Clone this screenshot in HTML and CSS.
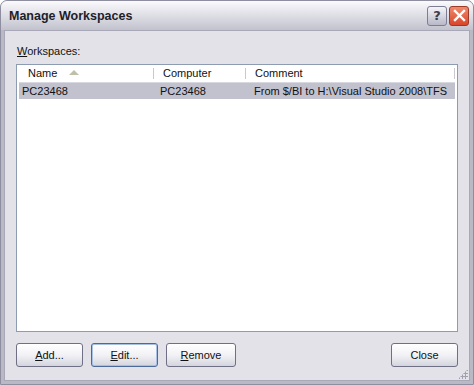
FILE: index.html
```html
<!DOCTYPE html>
<html>
<head>
    <title>Manage Workspaces</title>
    <meta name="viewport" content="width=device-width, initial-scale=1.0">
    <link rel="stylesheet" href="styles.css">
</head>
<body>
    <div class="window">
        <div class="titlebar">
            <span class="title">Manage Workspaces</span>
            <div class="caption-buttons">
                <div class="cap-btn help">?</div>
                <div class="cap-btn close">
                    <svg width="13" height="13" viewBox="0 0 13 13">
                        <path d="M2 2 L11 11 M11 2 L2 11" stroke="#fff" stroke-width="2.4" stroke-linecap="square"/>
                    </svg>
                </div>
            </div>
        </div>
        <div class="client">
            <div class="label"><u>W</u>orkspaces:</div>
            <div class="listview">
                <div class="lv-header">
                    <div class="col col-name">Name <span class="sort-arrow"></span></div>
                    <div class="col col-computer">Computer</div>
                    <div class="col col-comment">Comment</div>
                </div>
                <div class="lv-row selected">
                    <div class="col col-name">PC23468</div>
                    <div class="col col-computer">PC23468</div>
                    <div class="col col-comment">From $/BI to H:\Visual Studio 2008\TFS</div>
                </div>
            </div>
            <div class="button-row">
                <button class="btn"><u>A</u>dd...</button>
                <button class="btn default"><u>E</u>dit...</button>
                <button class="btn wide"><u>R</u>emove</button>
                <span class="spacer"></span>
                <button class="btn">Close</button>
            </div>
            <div class="grip"></div>
        </div>
    </div>
</body>
</html>
```

FILE: styles.css
```css
body {
    margin: 0;
    background-color: #fff;
    font-family: "Liberation Sans", Arial, sans-serif;
    font-size: 11px;
    color: #111;
}
.window {
    width: 474px;
    height: 385px;
    box-sizing: border-box;
    background-color: #b9b9c6;
    border: 1px solid #8e8ea0;
    border-radius: 7px 7px 0 0;
    padding: 0 3px 3px 3px;
    display: flex;
    flex-direction: column;
}
.titlebar {
    height: 29px;
    margin: 0 -3px;
    padding: 0 4px 0 8px;
    display: flex;
    align-items: center;
    border-radius: 6px 6px 0 0;
    background: linear-gradient(#fbfbfd 0%, #e6e6ec 35%, #d3d3dc 70%, #c2c2cd 100%);
}
.title {
    font-family: "Liberation Sans", Arial, sans-serif;
    font-weight: bold;
    font-size: 12.5px;
    color: #1e1e2a;
    flex: 1;
    padding-top: 1px;
}
.caption-buttons {
    display: flex;
    gap: 2px;
}
.cap-btn {
    width: 20px;
    height: 20px;
    border-radius: 3px;
    display: flex;
    align-items: center;
    justify-content: center;
    box-sizing: border-box;
}
.help {
    background: linear-gradient(#f4f4f8, #b8b8c8);
    border: 1px solid #7d7d94;
    color: #3a3a50;
    font-weight: bold;
    font-size: 13px;
    font-family: "DejaVu Sans", sans-serif;
}
.close {
    background: linear-gradient(#f08a6c, #d8452a);
    border: 1px solid #9c3a2a;
}
.client {
    flex: 1;
    background-color: #e2e2e8;
    border: 1px solid #a8a8b8;
    padding: 14px 11px 0 11px;
    display: flex;
    flex-direction: column;
    position: relative;
}
.label {
    height: 17px;
    padding-left: 1px;
}
.listview {
    height: 266px;
    background-color: #fff;
    border: 1px solid #8e9cb2;
    margin-top: 2px;
    padding: 0 2px;
}
.lv-header {
    display: flex;
    height: 17px;
    align-items: center;
    border-bottom: 1px solid #d8d8e0;
    background-color: #fff;
}
.lv-header .col {
    border-right: 1px solid #c8c8d0;
    height: 11px;
    line-height: 11px;
    padding-left: 9px;
}
.col {
    box-sizing: border-box;
    white-space: nowrap;
}
.col-name {
    width: 135px;
}
.col-computer {
    width: 92px;
}
.col-comment {
    width: 209px;
}
.sort-arrow {
    display: inline-block;
    margin-left: 9px;
    width: 0;
    height: 0;
    border-left: 5px solid transparent;
    border-right: 5px solid transparent;
    border-bottom: 5px solid #c0bfa8;
    vertical-align: 2px;
}
.lv-row {
    display: flex;
    height: 16px;
    align-items: center;
}
.lv-row .col {
    padding-left: 3px;
}
.lv-row .col-computer {
    padding-left: 6px;
}
.lv-row .col-comment {
    padding-left: 8px;
}
.lv-row.selected {
    background-color: #c2c2ce;
}
.button-row {
    display: flex;
    margin-top: 11px;
    gap: 8px;
}
.spacer {
    flex: 1;
}
.btn {
    width: 67px;
    height: 24px;
    font-family: "Liberation Sans", Arial, sans-serif;
    font-size: 11px;
    color: #111;
    border: 1px solid #6f6f86;
    border-radius: 3px;
    background: linear-gradient(#ffffff 0%, #f2f2f6 50%, #d4d4de 100%);
    padding: 0;
}
.btn.wide {
    width: 70px;
}
.btn.default {
    border-color: #4a6a9c;
    box-shadow: inset 0 0 0 1px #a8c0e4;
}
.grip {
    position: absolute;
    right: 1px;
    bottom: 1px;
    width: 10px;
    height: 10px;
    background: radial-gradient(circle, #a0a0b0 1px, transparent 1.2px) 0 0 / 3px 3px;
    clip-path: polygon(100% 0, 100% 100%, 0 100%);
}
```
